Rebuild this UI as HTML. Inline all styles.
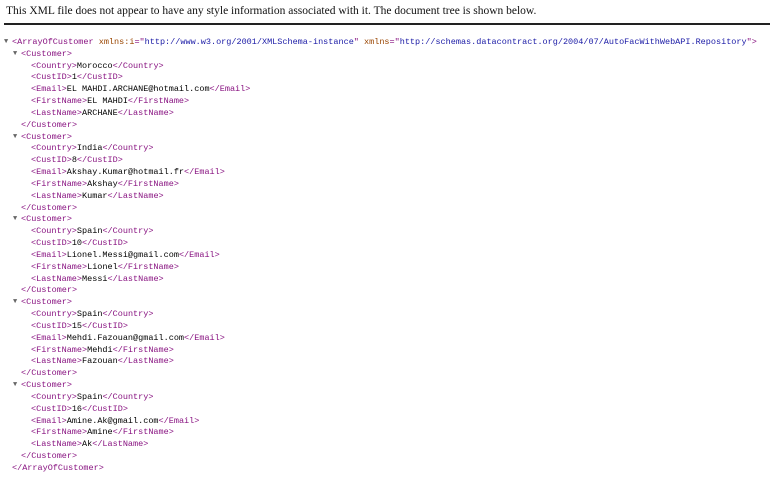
<!DOCTYPE html><html><head><style>
body{margin:0;background:#fff;width:774px;height:478px;overflow:hidden}
.h{font-family:"Liberation Serif",serif;font-size:11.5px;position:absolute;left:6px;top:5px;color:#111;white-space:nowrap}
.rule{position:absolute;left:4px;right:4px;top:23px;height:2px;background:#222}
.x{position:absolute;top:37px;left:0;font-family:"Liberation Mono",monospace;font-size:8.5px;line-height:11.84px;color:#000}
.t{color:#881280}.a{color:#994500}.v{color:#1a1aa6}
.l{position:relative;white-space:pre;height:11.84px}
.ar{position:absolute;font-size:7px;color:#666}
</style></head><body>
<div class="h">This XML file does not appear to have any style information associated with it. The document tree is shown below.</div>
<div class="rule"></div>
<div class="x"><div class="l" style="left:12px"><span class="ar" style="left:-8px">▼</span><span class="t">&lt;ArrayOfCustomer</span> <span class="a">xmlns:i</span><span class="t">="</span><span class="v">http://www.w3.org/2001/XMLSchema-instance</span><span class="t">"</span> <span class="a">xmlns</span><span class="t">="</span><span class="v">http://schemas.datacontract.org/2004/07/AutoFacWithWebAPI.Repository</span><span class="t">"&gt;</span></div><div id="c"></div><div class="l" style="left:12px"><span class="t">&lt;/ArrayOfCustomer&gt;</span></div></div>
<script>
var d=[["Morocco","1","EL MAHDI.ARCHANE@hotmail.com","EL MAHDI","ARCHANE"],["India","8","Akshay.Kumar@hotmail.fr","Akshay","Kumar"],["Spain","10","Lionel.Messi@gmail.com","Lionel","Messi"],["Spain","15","Mehdi.Fazouan@gmail.com","Mehdi","Fazouan"],["Spain","16","Amine.Ak@gmail.com","Amine","Ak"]];
var n=["Country","CustID","Email","FirstName","LastName"],h="";
d.forEach(function(r){h+='<div class="l" style="left:21px"><span class="ar" style="left:-8px">▼</span><span class="t">&lt;Customer&gt;</span></div>';
r.forEach(function(v,i){h+='<div class="l" style="left:31px"><span class="t">&lt;'+n[i]+'&gt;</span>'+v+'<span class="t">&lt;/'+n[i]+'&gt;</span></div>';});
h+='<div class="l" style="left:21px"><span class="t">&lt;/Customer&gt;</span></div>';});
document.getElementById("c").innerHTML=h;
</script>
</body></html>
